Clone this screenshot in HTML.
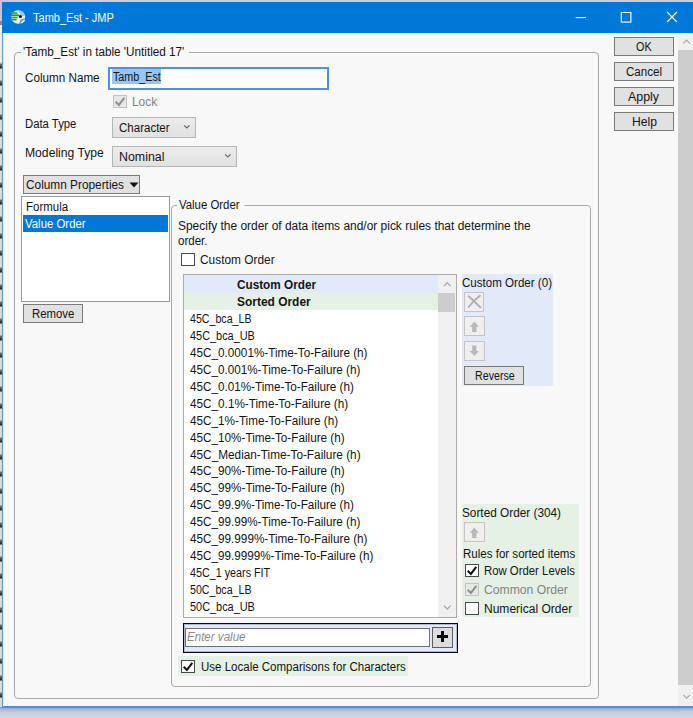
<!DOCTYPE html>
<html><head><meta charset="utf-8"><title>Tamb_Est - JMP</title>
<style>
html,body{margin:0;padding:0}
body{width:693px;height:718px;overflow:hidden;position:relative;background:#c9cbdc;font:12px "Liberation Sans",sans-serif;color:#111}
div,span,svg{position:absolute;box-sizing:border-box}
.t{white-space:pre;line-height:16px;height:16px;transform-origin:0 50%;color:#141414}
.btn{background:#e1e1e1;border:1px solid #7a7a7a}
.dd{background:linear-gradient(#ececec,#e1e1e1);border:1px solid #b6b6b6}
.cb{width:14px;height:13px;background:#fff;border:1px solid #4a4a4a}
.cb.dis{background:#e7e7e7;border-color:#c2c2c2}
.ib{width:21px;height:20px;background:#efefef;border:1px solid #c4c4c4}
.grp{border:1px solid #a9a9a9;border-radius:4px}
</style></head><body>
<!-- outside strips -->
<div style="left:0;top:0;width:3px;height:22px;background:#c6c3da"></div>
<div style="left:0;top:21px;width:3px;height:4px;background:#8c8c8c"></div>
<div style="left:0;top:25px;width:3px;height:683px;background:#ececec"></div>
<div style="left:0;top:62px;width:3px;height:645px;background:repeating-linear-gradient(#d9d9d9 0,#d9d9d9 1px,#777 2px,#222 6px,#d9d9d9 7px,#d9d9d9 17px)"></div>
<div style="left:0;top:707px;width:693px;height:11px;background:linear-gradient(#9299ae 0,#abb2c2 2px,#c3ccd8 5px,#d0d9e3 100%)"></div>
<!-- window -->
<div id="win" style="left:2px;top:2px;width:700px;height:706px;background:#f8f8f8;border-left:1px solid #5499dc;border-bottom:2px solid #4f93d8"></div>
<div id="title" style="left:2px;top:2px;width:691px;height:31px;background:#0078d7"></div>
<!-- icon -->
<svg style="left:10px;top:9px" width="16" height="16" viewBox="0 0 16 16">
 <ellipse cx="8.2" cy="8" rx="7" ry="6.8" fill="#e9f3ff"/>
 <path d="M8.5 1.4 A6.8 6.8 0 0 1 15 7 L11 7.4 Z" fill="#9cc7f5"/>
 <path d="M15 9 A6.8 6.8 0 0 1 9 14.8 L10.5 10.5 Z" fill="#5aa2ea"/>
 <rect x="1" y="3.2" width="6.6" height="1.6" fill="#2ea52e"/>
 <rect x="0.6" y="5.4" width="8.4" height="1.8" fill="#1f9a20"/>
 <rect x="0.8" y="7.8" width="6.8" height="1.7" fill="#35b535"/>
 <rect x="1.6" y="10" width="5" height="1.5" fill="#2aa02a"/>
 <circle cx="10.4" cy="7.4" r="1.5" fill="#0a0a14"/>
 <path d="M11.5 14 L14.6 11.2" stroke="#fff" stroke-width="1.3"/>
</svg>
<!-- window controls -->
<svg style="left:570px;top:6px" width="120" height="24" viewBox="0 0 120 24" fill="none" stroke="#fff" stroke-width="1.1">
 <path d="M5.7 11.6 H16"/>
 <rect x="51.3" y="6.5" width="9.6" height="9.6"/>
 <path d="M97 6 L107 16 M107 6 L97 16"/>
</svg>
<!-- right scrollbar -->
<div style="left:678px;top:33px;width:15px;height:673px;background:#f0f0f0"></div>
<div style="left:678px;top:50px;width:15px;height:635px;background:#cdcdcd"></div>
<svg style="left:679px;top:33px" width="15" height="17" viewBox="0 0 15 17" fill="none" stroke="#a8a8a8" stroke-width="1.2"><path d="M4.2 10.6 L7.6 7.2 L11 10.6"/></svg>
<svg style="left:679px;top:688px" width="15" height="17" viewBox="0 0 15 17" fill="none" stroke="#a8a8a8" stroke-width="1.2"><path d="M4.2 6.8 L7.6 10.2 L11 6.8"/></svg>
<!-- right buttons -->
<div class="btn" style="left:614px;top:37px;width:60px;height:19px"></div>
<div class="btn" style="left:614px;top:62px;width:60px;height:19px"></div>
<div class="btn" style="left:614px;top:87px;width:60px;height:19px"></div>
<div class="btn" style="left:614px;top:112px;width:60px;height:19px"></div>
<!-- outer group -->
<div class="grp" style="left:14px;top:52px;width:585px;height:647px"></div>
<!-- column name input -->
<div style="left:108px;top:67px;width:221px;height:23px;background:#fff;border:2px solid #4a93dc"></div>
<div style="left:112px;top:69px;width:49px;height:15px;background:#97c6ee"></div>
<!-- lock -->
<div class="cb dis" style="left:113px;top:95px"></div>
<svg style="left:113px;top:95px" width="14" height="13" viewBox="0 0 14 13" fill="none" stroke="#8e8e8e" stroke-width="2"><path d="M2.7 6.7 L5.9 9.9 L11.3 2.8"/></svg>
<!-- dropdowns -->
<div class="dd" style="left:112px;top:117px;width:84px;height:21px"></div>
<svg style="left:182px;top:122px" width="10" height="10" viewBox="0 0 10 10" fill="none" stroke="#666" stroke-width="1.2"><path d="M2.1 3.3 L4.8 6 L7.5 3.3"/></svg>
<div class="dd" style="left:112px;top:146px;width:125px;height:21px"></div>
<svg style="left:223px;top:151px" width="10" height="10" viewBox="0 0 10 10" fill="none" stroke="#666" stroke-width="1.2"><path d="M2.1 3.3 L4.8 6 L7.5 3.3"/></svg>
<!-- column properties -->
<div class="btn" style="left:23px;top:175px;width:117px;height:19px"></div>
<svg style="left:127.5px;top:181px" width="12" height="8" viewBox="0 0 12 8"><path d="M1.5 1.5 H10.5 L6 6.5 Z" fill="#111"/></svg>
<!-- left list -->
<div style="left:21px;top:196px;width:149px;height:106px;background:#fff;border:1px solid #9a9a9a"></div>
<div style="left:23px;top:215px;width:145px;height:17px;background:#0078d7"></div>
<div class="btn" style="left:23px;top:304px;width:60px;height:19px"></div>
<!-- inner group -->
<div class="grp" style="left:171px;top:205px;width:420px;height:482px"></div>
<div class="cb" style="left:181px;top:253px"></div>
<!-- main list -->
<div style="left:183px;top:274px;width:274px;height:344px;background:#fff;border:1px solid #ababab"></div>
<div style="left:184px;top:275px;width:254px;height:18px;background:#e2e9f9"></div>
<div style="left:184px;top:293px;width:254px;height:17px;background:#e4f1e4"></div>
<div style="left:438px;top:275px;width:18px;height:342px;background:#f0f0f0"></div>
<div style="left:438px;top:293px;width:17px;height:19px;background:#cdcdcd"></div>
<svg style="left:438px;top:276px" width="18" height="17" viewBox="0 0 18 17" fill="none" stroke="#a3a3a3" stroke-width="1.2"><path d="M5.9 10.2 L9.2 6.7 L12.5 10.2"/></svg>
<svg style="left:438px;top:598px" width="18" height="17" viewBox="0 0 18 17" fill="none" stroke="#a3a3a3" stroke-width="1.2"><path d="M6 7.6 L9.3 11.1 L12.6 7.6"/></svg>
<!-- blue panel -->
<div style="left:462px;top:274px;width:91px;height:112px;background:#e2e9f9"></div>
<div class="ib" style="left:464px;top:292px;width:20px"></div>
<svg style="left:464px;top:292px" width="20" height="20" viewBox="0 0 20 20" fill="none" stroke="#adadad" stroke-width="1.8" stroke-linecap="round"><path d="M4.6 4.2 Q9 8 16.4 15.4 M16 3.8 Q9 9 4.6 15"/></svg>
<div class="ib" style="left:464px;top:316px"></div>
<svg style="left:464px;top:316px" width="20" height="20" viewBox="0 0 20 20"><path d="M10.3 5.6 L14.9 10.7 H12.5 V16 H8.1 V10.7 H5.7 Z" fill="#b9b9b9"/></svg>
<div class="ib" style="left:464px;top:341px"></div>
<svg style="left:464px;top:341px" width="20" height="20" viewBox="0 0 20 20"><path d="M10.3 15 L14.9 9.9 H12.5 V4.4 H8.1 V9.9 H5.7 Z" fill="#b9b9b9"/></svg>
<div class="btn" style="left:464px;top:366px;width:60px;height:19px"></div>
<!-- green panel -->
<div style="left:462px;top:504px;width:117px;height:113px;background:#e4f1e4"></div>
<div class="ib" style="left:464px;top:522px"></div>
<svg style="left:464px;top:522px" width="20" height="20" viewBox="0 0 20 20"><path d="M10.3 5.6 L14.9 10.7 H12.5 V16 H8.1 V10.7 H5.7 Z" fill="#b9b9b9"/></svg>
<div class="cb" style="left:465px;top:564px"></div>
<svg style="left:465px;top:564px" width="14" height="13" viewBox="0 0 14 13" fill="none" stroke="#111" stroke-width="2"><path d="M2.7 6.7 L5.9 9.9 L11.3 2.8"/></svg>
<div class="cb dis" style="left:465px;top:583px"></div>
<svg style="left:465px;top:583px" width="14" height="13" viewBox="0 0 14 13" fill="none" stroke="#8e8e8e" stroke-width="2"><path d="M2.7 6.7 L5.9 9.9 L11.3 2.8"/></svg>
<div class="cb" style="left:465px;top:602px"></div>
<!-- enter value -->
<div style="left:183px;top:623px;width:275px;height:30px;background:#e2e9f9;border:1px solid #07070f;box-shadow:inset 0 0 0 1px rgba(10,10,30,.22)"></div>
<div style="left:185px;top:628px;width:245px;height:19px;background:#fff;border:1px solid #6f6f78"></div>
<div style="left:432px;top:627px;width:21px;height:21px;background:#dddddd;border:1px solid #5e5e5e"></div>
<svg style="left:432px;top:626px" width="22" height="22" viewBox="0 0 22 22"><path d="M9 5 H12 V9 H16 V12 H12 V16 H9 V12 H5 V9 H9 Z" fill="#0a0a0a"/></svg>
<!-- locale -->
<div style="left:178px;top:656px;width:230px;height:20px;background:#e4f1e4"></div>
<div class="cb" style="left:181px;top:660px"></div>
<svg style="left:181px;top:660px" width="14" height="13" viewBox="0 0 14 13" fill="none" stroke="#111" stroke-width="2"><path d="M2.7 6.7 L5.9 9.9 L11.3 2.8"/></svg>
<span class="t" style="left:32.8px;top:10.2px;transform:scaleX(0.8813);color:#fff;font-size:12.5px">Tamb_Est - JMP</span>
<span class="t" style="left:22.6px;top:44.0px;transform:scaleX(0.9766);background:#f8f8f8;padding:0 5px 0 2px;margin-left:-2px">'Tamb_Est' in table 'Untitled 17'</span>
<span class="t" style="left:25.4px;top:70.0px;transform:scaleX(0.9726);">Column Name</span>
<span class="t" style="left:131.9px;top:94.0px;transform:scaleX(0.9898);color:#838383">Lock</span>
<span class="t" style="left:25.4px;top:116.0px;transform:scaleX(0.9434);">Data Type</span>
<span class="t" style="left:118.6px;top:120.0px;transform:scaleX(0.9604);">Character</span>
<span class="t" style="left:25.4px;top:144.7px;transform:scaleX(1.0123);">Modeling Type</span>
<span class="t" style="left:118.6px;top:148.8px;transform:scaleX(1.0315);">Nominal</span>
<span class="t" style="left:25.6px;top:177.0px;transform:scaleX(0.9862);">Column Properties</span>
<span class="t" style="left:25.6px;top:199.0px;transform:scaleX(0.9565);">Formula</span>
<span class="t" style="left:25.2px;top:216.0px;transform:scaleX(0.9497);color:#fff">Value Order</span>
<span class="t" style="left:31.6px;top:305.6px;transform:scaleX(0.9488);">Remove</span>
<span class="t" style="left:178.7px;top:197.0px;transform:scaleX(0.9512);background:#f8f8f8;padding:0 5px 0 2px;margin-left:-2px">Value Order</span>
<span class="t" style="left:178.0px;top:218.0px;transform:scaleX(0.9958);">Specify the order of data items and/or pick rules that determine the</span>
<span class="t" style="left:178.0px;top:233.2px;transform:scaleX(0.9613);">order.</span>
<span class="t" style="left:200.3px;top:252.0px;transform:scaleX(0.9913);">Custom Order</span>
<span class="t" style="left:237.0px;top:277.0px;transform:scaleX(0.9791);font-weight:bold">Custom Order</span>
<span class="t" style="left:237.0px;top:293.5px;transform:scaleX(0.9957);font-weight:bold">Sorted Order</span>
<span class="t" style="left:462.0px;top:274.7px;transform:scaleX(0.9640);">Custom Order (0)</span>
<span class="t" style="left:474.7px;top:368.0px;transform:scaleX(0.8884);">Reverse</span>
<span class="t" style="left:462.0px;top:504.7px;transform:scaleX(0.9829);">Sorted Order (304)</span>
<span class="t" style="left:462.5px;top:546.0px;transform:scaleX(0.9613);">Rules for sorted items</span>
<span class="t" style="left:483.8px;top:562.8px;transform:scaleX(0.9464);">Row Order Levels</span>
<span class="t" style="left:483.8px;top:582.0px;transform:scaleX(1.0147);color:#838383">Common Order</span>
<span class="t" style="left:483.8px;top:600.8px;transform:scaleX(1.0019);">Numerical Order</span>
<span class="t" style="left:187.3px;top:629.0px;transform:scaleX(0.9637);font-style:italic;color:#8a8a8a">Enter value</span>
<span class="t" style="left:200.8px;top:659.4px;transform:scaleX(0.9596);">Use Locale Comparisons for Characters</span>
<span class="t" style="left:636.4px;top:38.5px;transform:scaleX(0.8995);">OK</span>
<span class="t" style="left:626.0px;top:63.7px;transform:scaleX(0.9636);">Cancel</span>
<span class="t" style="left:628.0px;top:89.4px;transform:scaleX(1.0323);">Apply</span>
<span class="t" style="left:632.0px;top:114.0px;transform:scaleX(1.0127);">Help</span>
<span class="t" style="left:189.6px;top:311.0px;transform:scaleX(0.8863)">45C_bca_LB</span>
<span class="t" style="left:189.6px;top:328.0px;transform:scaleX(0.9091)">45C_bca_UB</span>
<span class="t" style="left:189.6px;top:345.0px;transform:scaleX(0.9773)">45C_0.0001%-Time-To-Failure (h)</span>
<span class="t" style="left:189.6px;top:362.0px;transform:scaleX(0.9734)">45C_0.001%-Time-To-Failure (h)</span>
<span class="t" style="left:189.6px;top:379.0px;transform:scaleX(0.9740)">45C_0.01%-Time-To-Failure (h)</span>
<span class="t" style="left:189.6px;top:396.0px;transform:scaleX(0.9789)">45C_0.1%-Time-To-Failure (h)</span>
<span class="t" style="left:189.6px;top:413.0px;transform:scaleX(0.9770)">45C_1%-Time-To-Failure (h)</span>
<span class="t" style="left:189.6px;top:430.0px;transform:scaleX(0.9774)">45C_10%-Time-To-Failure (h)</span>
<span class="t" style="left:189.6px;top:447.0px;transform:scaleX(0.9827)">45C_Median-Time-To-Failure (h)</span>
<span class="t" style="left:189.6px;top:463.0px;transform:scaleX(0.9774)">45C_90%-Time-To-Failure (h)</span>
<span class="t" style="left:189.6px;top:480.0px;transform:scaleX(0.9774)">45C_99%-Time-To-Failure (h)</span>
<span class="t" style="left:189.6px;top:497.0px;transform:scaleX(0.9740)">45C_99.9%-Time-To-Failure (h)</span>
<span class="t" style="left:189.6px;top:514.0px;transform:scaleX(0.9734)">45C_99.99%-Time-To-Failure (h)</span>
<span class="t" style="left:189.6px;top:531.0px;transform:scaleX(0.9773)">45C_99.999%-Time-To-Failure (h)</span>
<span class="t" style="left:189.6px;top:548.0px;transform:scaleX(0.9735)">45C_99.9999%-Time-To-Failure (h)</span>
<span class="t" style="left:189.6px;top:565.0px;transform:scaleX(0.8973)">45C_1 years FIT</span>
<span class="t" style="left:189.6px;top:582.0px;transform:scaleX(0.8863)">50C_bca_LB</span>
<span class="t" style="left:189.6px;top:599.0px;transform:scaleX(0.9091)">50C_bca_UB</span>
<span class="t" style="left:113.2px;top:69px;transform:scaleX(0.8958)">Tamb_Est</span>
</body></html>
